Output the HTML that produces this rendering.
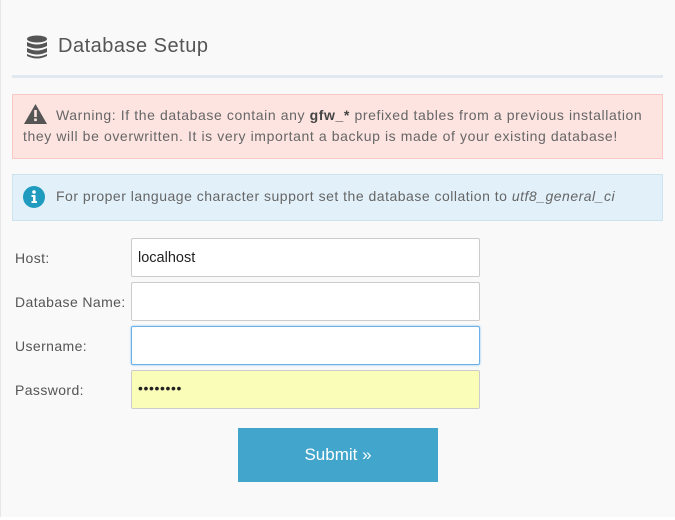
<!DOCTYPE html>
<html><head><style>
html,body{margin:0;padding:0;}
body{width:675px;height:520px;background:#f9f9f9;font-family:"Liberation Sans",sans-serif;position:relative;overflow:hidden;color:#555;}
.lb{position:absolute;left:0;top:0;width:1px;height:517px;background:#e6e6e6;}
.bt{position:absolute;left:0;top:517px;width:675px;height:3px;background:#fff;}
h1{position:absolute;left:58px;top:35px;margin:0;font-size:20px;font-weight:normal;color:#555;letter-spacing:0.5px;}
.div{position:absolute;left:12px;top:75px;width:651px;height:3px;background:#e1e8f0;}
.warn{position:absolute;left:12px;top:94px;width:649px;height:63px;background:#fde4e1;border:1px solid #f9c8c4;font-size:14px;line-height:21px;color:#666;letter-spacing:0.6px;}
.warn .t{position:absolute;left:10px;top:10px;width:640px;}
.info{position:absolute;left:12px;top:174px;width:649px;height:45px;background:#e1f0f9;border:1px solid #cde4ef;font-size:14px;color:#666;letter-spacing:0.5px;}
.lbl{position:absolute;left:15px;font-size:14px;color:#555;letter-spacing:0.4px;}
.in{position:absolute;left:131px;width:347px;height:37px;background:#fff;border:1px solid #ccc;border-radius:2px;font-size:14.5px;color:#222;}
.btn{position:absolute;left:238px;top:428px;width:200px;height:54px;background:#42a5cc;color:#fff;font-size:17px;text-align:center;line-height:54px;}
</style></head><body>
<div class="lb"></div><div class="bt"></div>
<svg style="position:absolute;left:26px;top:35px" width="22" height="25" viewBox="0 0 22 25">
<ellipse cx="11" cy="4" rx="10" ry="3.5" fill="#555"/>
<path d="M1 7 Q11 12 21 7 V11 Q11 16 1 11Z" fill="#555"/>
<path d="M1 13 Q11 18 21 13 V17 Q11 22 1 17Z" fill="#555"/>
<path d="M1 19 Q11 24 21 19 V21 Q11 26 1 21Z" fill="#555"/>
</svg>
<h1>Database Setup</h1>
<div class="div"></div>
<div class="warn">
<svg style="position:absolute;left:11px;top:9px" width="23" height="20" viewBox="0 0 23 20"><path d="M11.5 0 L23 20 H0Z" fill="#555"/><rect x="10.2" y="6" width="2.6" height="7" fill="#fde4e1"/><rect x="10.2" y="14.5" width="2.6" height="2.6" fill="#fde4e1"/></svg>
<div class="t"><span style="padding-left:33px"></span>Warning: If the database contain any <b style="color:#444">gfw_*</b> prefixed tables from a previous installation they will be overwritten. It is very important a backup is made of your existing database!</div>
</div>
<div class="info">
<svg style="position:absolute;left:10px;top:11px" width="22" height="22" viewBox="0 0 22 22"><circle cx="11" cy="11" r="11" fill="#1f9bbf"/><circle cx="11" cy="6" r="1.8" fill="#fff"/><path d="M8.5 9 H12.5 V15 H14 V17 H8.5 V15 H10 V11 H8.5Z" fill="#fff"/></svg>
<div style="position:absolute;left:43px;top:13px">For proper language character support set the database collation to <i>utf8_general_ci</i></div>
</div>
<div class="lbl" style="top:250px">Host:</div>
<div class="lbl" style="top:294px">Database Name:</div>
<div class="lbl" style="top:338px">Username:</div>
<div class="lbl" style="top:382px">Password:</div>
<div class="in" style="top:238px"><span style="position:absolute;left:6px;top:11px">localhost</span></div>
<div class="in" style="top:282px"></div>
<div class="in" style="top:326px;border-color:#6cb0ea;box-shadow:0 0 2px #8cc3f0"></div>
<div class="in" style="top:370px;background:#f9fdb7"><span style="position:absolute;left:6px;top:9px;font-size:14px;letter-spacing:0.6px">••••••••</span></div>
<div class="btn">Submit »</div>
</body></html>
